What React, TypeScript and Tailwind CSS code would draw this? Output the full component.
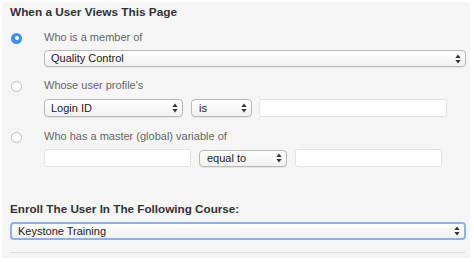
import React from "react";

const font = { fontFamily: '"Liberation Sans", Arial, sans-serif' };

const Arrows = () => (
  <svg width="6" height="10" viewBox="0 0 6 10" className="shrink-0">
    <path d="M3 0.5 L5.6 4 L0.4 4 Z" fill="#333" />
    <path d="M3 9.5 L5.6 6 L0.4 6 Z" fill="#333" />
  </svg>
);

const Select = ({
  value,
  className,
  focused,
}: {
  value: string;
  className: string;
  focused?: boolean;
}) => (
  <div
    className={`flex items-center justify-between rounded-[4px] pl-[6px] pr-[4px] text-[11px] text-[#222] bg-gradient-to-b from-white to-[#f1f1f1] ${
      focused
        ? "border-2 border-[#86b3ee] pl-[5px]"
        : "border border-[#b9b9b9] shadow-[0_1px_0_rgba(0,0,0,0.06)]"
    } ${className}`}
  >
    <span className="leading-none">{value}</span>
    <Arrows />
  </div>
);

const TextBox = ({ className }: { className: string }) => (
  <div className={`rounded-[3px] border border-[#e2e2e2] bg-white ${className}`} />
);

const Radio = ({ checked }: { checked?: boolean }) =>
  checked ? (
    <div className="ml-[1px] flex h-[11px] w-[11px] items-center justify-center rounded-full bg-[#3a8ff0]">
      <div className="h-[4px] w-[4px] rounded-full bg-white" />
    </div>
  ) : (
    <div className="ml-[1px] h-[11px] w-[11px] rounded-full border border-[#bdbdbd] bg-white" />
  );

const Option = ({ checked, label }: { checked?: boolean; label: string }) => (
  <div className="flex h-[14px] items-center">
    <div className="w-[34px] pt-[2px]">
      <Radio checked={checked} />
    </div>
    <span className="text-[11px] leading-[14px] text-[#666]">{label}</span>
  </div>
);

export default function App() {
  return (
    <div className="h-[262px] w-[474px] bg-white pl-[2px] pt-[2px]" style={font}>
      <div className="h-[256px] w-[468px] bg-[#f5f5f5] pl-[8px] pt-[3px]">
        <div className="h-[14px] text-[11.8px] font-bold leading-[14px] text-[#333]">
          When a User Views This Page
        </div>

        <div className="mt-[11px]">
          <Option checked label="Who is a member of" />
        </div>
        <div className="mt-[6px] pl-[34px]">
          <Select value="Quality Control" className="h-[17px] w-[422px]" />
        </div>

        <div className="mt-[11px]">
          <Option label="Whose user profile's" />
        </div>
        <div className="mt-[7px] flex items-center pl-[34px]">
          <Select value="Login ID" className="h-[18px] w-[139px]" />
          <Select value="is" className="ml-[8px] h-[18px] w-[61px] pl-[7px]" />
          <TextBox className="ml-[7px] h-[18px] w-[188px]" />
        </div>

        <div className="mt-[12px]">
          <Option label="Who has a master (global) variable of" />
        </div>
        <div className="mt-[6px] flex items-center pl-[34px]">
          <TextBox className="h-[18px] w-[147px]" />
          <Select value="equal to" className="ml-[8px] h-[17px] w-[88px] pl-[7px]" />
          <TextBox className="ml-[8px] h-[18px] w-[147px]" />
        </div>

        <div className="mt-[35px] h-[14px] text-[11.7px] font-bold leading-[14px] text-[#333]">
          Enroll The User In The Following Course:
        </div>
        <div className="mt-[6px]">
          <Select value="Keystone Training" focused className="h-[18px] w-[456px]" />
        </div>
        <div className="mt-[12px] h-px w-[455px] bg-[#dcdcdc]" />
      </div>
    </div>
  );
}
